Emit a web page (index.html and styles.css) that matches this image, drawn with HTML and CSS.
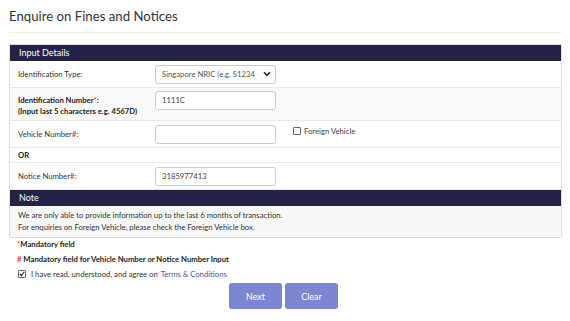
FILE: index.html
```html
<!DOCTYPE html>
<html lang="en">
<head>
    <meta charset="UTF-8">
    <meta name="viewport" content="width=device-width, initial-scale=1.0">
    <title>Enquire on Fines and Notices</title>
    <link rel="stylesheet" href="styles.css">
</head>
<body>
    <div class="page">
        <h1 class="title">Enquire on Fines and Notices</h1>
        <hr class="rule">

        <div class="panel">
            <div class="panel-head">Input Details</div>

            <div class="row">
                <div class="label">Identification Type:</div>
                <div class="field">
                    <div class="select">
                        <span class="select-text">Singapore NRIC (e.g. S1234</span>
                        <svg class="chev" width="8" height="6" viewBox="0 0 8 6"><path d="M1 1.2 L4 4.4 L7 1.2" fill="none" stroke="#222" stroke-width="1.6"/></svg>
                    </div>
                </div>
            </div>

            <div class="row tall">
                <div class="label bold">Identification Number<span class="req">*</span>:<br>(Input last 5 characters e.g. 4567D)</div>
                <div class="field"><div class="input">1111C</div></div>
            </div>

            <div class="row">
                <div class="label">Vehicle Number<span class="req">#</span>:</div>
                <div class="field"><div class="input"></div></div>
                <label class="check"><span class="box"></span>Foreign Vehicle</label>
            </div>

            <div class="row or">
                <div class="label bold">OR</div>
            </div>

            <div class="row">
                <div class="label">Notice Number<span class="req">#</span>:</div>
                <div class="field"><div class="input">3185977413</div></div>
            </div>

            <div class="panel-head">Note</div>
            <div class="note">
                We are only able to provide information up to the last 6 months of transaction.<br>
                For enquiries on Foreign Vehicle, please check the Foreign Vehicle box.
            </div>
        </div>

        <p class="legend first"><span class="req">*</span>Mandatory field</p>
        <p class="legend"><span class="req">#</span> Mandatory field for Vehicle Number or Notice Number Input</p>

        <div class="agree">
            <span class="box checked">
                <svg width="8" height="8" viewBox="0 0 8 8"><path d="M1.2 4 L3.2 6.2 L6.9 1.3" fill="none" stroke="#222" stroke-width="1.5"/></svg>
            </span>
            I have read, understood, and agree on <a href="#" class="link">Terms &amp; Conditions</a>
        </div>

        <div class="actions">
            <button class="btn">Next</button>
            <button class="btn">Clear</button>
        </div>
    </div>
</body>
</html>
```

FILE: styles.css
```css
body {
    margin: 0;
    background-color: white;
    font-family: Lato, "Open Sans", Arial, sans-serif;
    color: #333;
}

.page {
    padding: 0 8px 0 9px;
}

.title {
    font-size: 13.2px;
    font-weight: normal;
    margin: 0;
    padding-top: 6px;
    line-height: 20px;
    color: #333;
}

.rule {
    border: none;
    border-top: 1px solid #eee;
    margin: 6px 0 11px 0;
}

.panel {
    border: 1px solid #ddd;
    border-radius: 2px;
    font-size: 7.7px;
    background-color: white;
}

.panel-head {
    background-color: #232347;
    color: white;
    font-size: 9px;
    height: 16px;
    line-height: 16px;
    padding-left: 9px;
}

.row {
    display: flex;
    align-items: center;
    height: 26px;
    border-bottom: 1px solid #eaeaea;
}

.row:nth-of-type(odd) {
    background-color: #f9f9f9;
}

.row.tall {
    height: 32px;
    align-items: flex-start;
}

.row.tall .label {
    padding-top: 7px;
}

.row.tall .field {
    padding-top: 3px;
}

.row.or {
    height: 14px;
    background-color: white;
}

.label {
    width: 137px;
    padding-left: 8px;
    line-height: 11px;
}

.bold {
    font-weight: bold;
    color: #222;
}

.req {
    color: #e8473f;
    font-weight: bold;
}

.field {
    width: 121px;
}

.input,
.select {
    box-sizing: border-box;
    height: 19px;
    border: 1px solid #ccc;
    border-radius: 3px;
    background-color: white;
    padding: 0 6px;
    line-height: 17px;
    font-size: 7.7px;
    color: #444;
}

.select {
    display: flex;
    align-items: center;
    padding-right: 4px;
}

.select-text {
    flex: 1;
    overflow: hidden;
    white-space: nowrap;
    color: #555;
}

.chev {
    margin-left: 2px;
}

.check {
    display: flex;
    align-items: center;
    margin-left: 17px;
    align-self: flex-start;
    margin-top: 5px;
    color: #444;
}

.box {
    display: inline-flex;
    align-items: center;
    justify-content: center;
    box-sizing: border-box;
    width: 8px;
    height: 8px;
    border: 1px solid #666;
    border-radius: 1px;
    background-color: white;
    margin-right: 3px;
}

.note {
    background-color: #f8f8f8;
    padding: 3px 8px 4px 8px;
    line-height: 12px;
    color: #333;
}

.legend {
    margin: 0;
    font-size: 7.7px;
    font-weight: bold;
    color: #222;
    padding-left: 8px;
    line-height: 15px;
}

.legend.first {
    margin-top: -1px;
}

.agree {
    display: flex;
    align-items: center;
    font-size: 7.7px;
    color: #333;
    padding-left: 9px;
    height: 13px;
}

.agree .box {
    margin-right: 5px;
}

.link {
    color: #4a56a6;
    text-decoration: none;
    margin-left: 3px;
}

.actions {
    display: flex;
    justify-content: center;
    gap: 3px;
    margin-top: 3px;
    padding-right: 4px;
}

.btn {
    width: 53px;
    height: 26px;
    border: none;
    border-radius: 3px;
    background-color: #7d86d2;
    color: white;
    font-family: Lato, Arial, sans-serif;
    font-size: 9px;
}
```
